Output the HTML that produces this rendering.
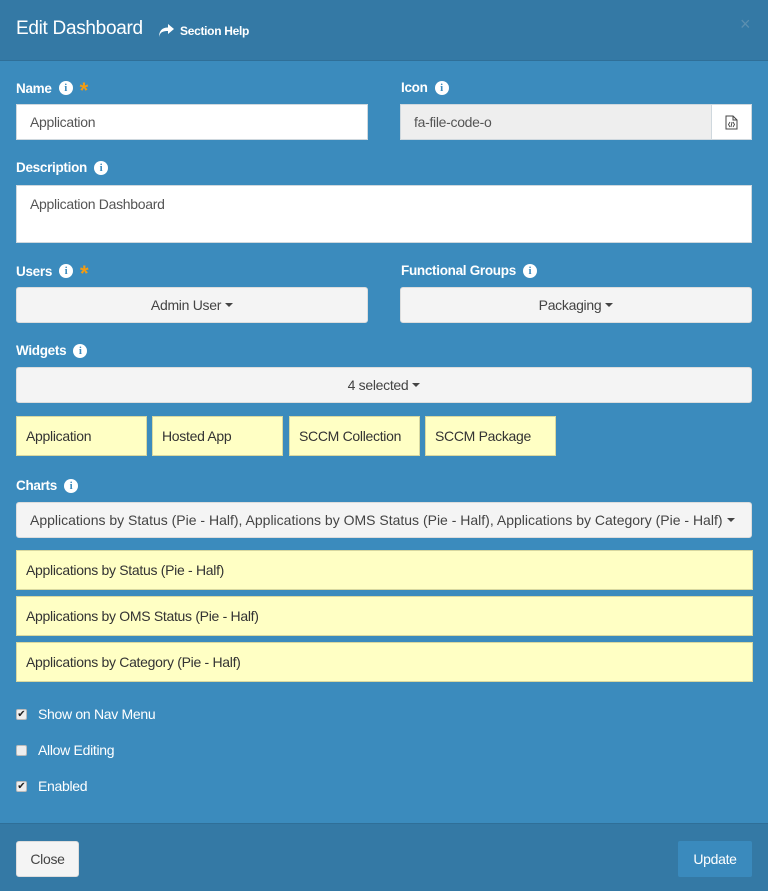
<!DOCTYPE html>
<html><head><meta charset="utf-8"><style>
*{box-sizing:border-box;margin:0;padding:0}
body{width:768px;height:891px;background:#3b8bbd;font-family:"Liberation Sans",sans-serif;position:relative;overflow:hidden;color:#555}
.a{position:absolute}
.hdr{left:0;top:0;width:768px;height:61px;background:#3479a5;border-bottom:1px solid #2f6f98}
.ftr{left:0;top:823px;width:768px;height:68px;background:#3479a5;border-top:1px solid #2f6f98}
.lbl{color:#fff;font-weight:bold;font-size:13.5px;letter-spacing:-0.3px;display:flex;align-items:center;gap:7px}
.info{display:inline-block;width:14px;height:14px;border-radius:50%;background:#fff;color:#3b8bbd;font-size:11px;font-weight:bold;text-align:center;line-height:14px;font-family:"Liberation Serif",serif}
.star{color:#f39c12;font-size:22px;line-height:10px;font-weight:bold;margin-top:6px}
.inp{background:#fff;border:1px solid #cfd8de;font-size:14px;color:#555;padding-left:13px;display:flex;align-items:center;letter-spacing:-0.3px}
.btn{background:#f4f4f4;border:1px solid #ddd;border-radius:3px;font-size:14px;color:#444;display:flex;align-items:center;justify-content:center;letter-spacing:-0.3px}
.car{display:inline-block;width:0;height:0;border-left:4px solid transparent;border-right:4px solid transparent;border-top:4px solid #444;margin-left:4px}
.y{background:#ffffc4;border:1px solid #d8d8a0;font-size:14px;color:#333;padding-left:9px;display:flex;align-items:center;letter-spacing:-0.3px}
.cb{width:11px;height:11px;background:#eee;border:1px solid #bbb;border-radius:2px;font-size:10px;line-height:9px;text-align:center;color:#222}
.ct{color:#fff;font-size:14px;letter-spacing:-0.3px}
</style></head><body>
<div class="a hdr"></div>
<div class="a" style="left:16px;top:18px;color:#fff;font-size:19px;letter-spacing:-0.3px">Edit Dashboard</div>
<svg class="a" style="left:158px;top:24px" width="16" height="14" viewBox="0 0 16 14"><path d="M10 0 L16 5 L10 10 V7 C5 7 2 8 1 13 C1 7 4 3.5 10 3.5 Z" fill="#fff"/></svg>
<div class="a" style="left:180px;top:24px;color:#fff;font-size:12px;font-weight:bold;letter-spacing:-0.3px">Section Help</div>
<div class="a" style="left:740px;top:14px;color:#5b8fb0;font-size:18px">×</div>

<div class="a lbl" style="left:16px;top:80px">Name <span class="info">i</span><span class="star">*</span></div>
<div class="a inp" style="left:16px;top:104px;width:352px;height:36px">Application</div>
<div class="a lbl" style="left:401px;top:80px">Icon <span class="info">i</span></div>
<div class="a inp" style="left:400px;top:104px;width:312px;height:36px;background:#eee">fa-file-code-o</div>
<div class="a inp" style="left:711px;top:104px;width:41px;height:36px;padding:0;justify-content:center">
<svg width="13" height="15" viewBox="0 0 13 15"><path d="M1 1H8L12 5V14H1Z M8 1V5H12" fill="none" stroke="#444" stroke-width="1"/><path d="M5 7L3.5 9.5L5 12 M8 7L9.5 9.5L8 12 M7 7L6 12" fill="none" stroke="#444" stroke-width="0.9"/></svg></div>

<div class="a lbl" style="left:16px;top:160px">Description <span class="info">i</span></div>
<div class="a inp" style="left:16px;top:185px;width:736px;height:58px;align-items:flex-start;padding-top:10px">Application Dashboard</div>

<div class="a lbl" style="left:16px;top:263px">Users <span class="info">i</span><span class="star">*</span></div>
<div class="a btn" style="left:16px;top:287px;width:352px;height:36px">Admin User<span class="car"></span></div>
<div class="a lbl" style="left:401px;top:263px">Functional Groups <span class="info">i</span></div>
<div class="a btn" style="left:400px;top:287px;width:352px;height:36px">Packaging<span class="car"></span></div>

<div class="a lbl" style="left:16px;top:343px">Widgets <span class="info">i</span></div>
<div class="a btn" style="left:16px;top:367px;width:736px;height:36px">4 selected<span class="car"></span></div>
<div class="a y" style="left:16px;top:416px;width:131px;height:40px">Application</div>
<div class="a y" style="left:152px;top:416px;width:131px;height:40px">Hosted App</div>
<div class="a y" style="left:289px;top:416px;width:131px;height:40px">SCCM Collection</div>
<div class="a y" style="left:425px;top:416px;width:131px;height:40px">SCCM Package</div>

<div class="a lbl" style="left:16px;top:478px">Charts <span class="info">i</span></div>
<div class="a btn" style="left:16px;top:502px;width:736px;height:36px;justify-content:flex-start;padding-left:13px;font-size:14px;letter-spacing:0px;white-space:nowrap">Applications by Status (Pie - Half), Applications by OMS Status (Pie - Half), Applications by Category (Pie - Half)<span class="car"></span></div>
<div class="a y" style="left:16px;top:550px;width:737px;height:40px">Applications by Status (Pie - Half)</div>
<div class="a y" style="left:16px;top:596px;width:737px;height:40px">Applications by OMS Status (Pie - Half)</div>
<div class="a y" style="left:16px;top:642px;width:737px;height:40px">Applications by Category (Pie - Half)</div>

<div class="a cb" style="left:16px;top:709px">✔</div><div class="a ct" style="left:38px;top:706px">Show on Nav Menu</div>
<div class="a cb" style="left:16px;top:745px"></div><div class="a ct" style="left:38px;top:742px">Allow Editing</div>
<div class="a cb" style="left:16px;top:781px">✔</div><div class="a ct" style="left:38px;top:778px">Enabled</div>

<div class="a ftr"></div>
<div class="a btn" style="left:16px;top:841px;width:63px;height:36px;background:#f4f4f4">Close</div>
<div class="a" style="left:678px;top:841px;width:74px;height:36px;background:#3a8abd;color:#fff;font-size:14px;display:flex;align-items:center;justify-content:center;border-radius:2px;letter-spacing:-0.3px">Update</div>
</body></html>
